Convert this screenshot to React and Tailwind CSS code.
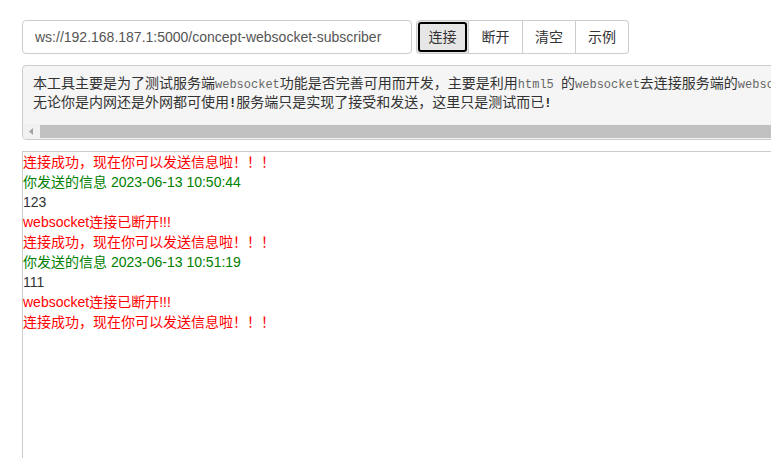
const logs = [
  { text: "连接成功，现在你可以发送信息啦！！！", color: "text-[#ff0000]" },
  { text: "你发送的信息 2023-06-13 10:50:44", color: "text-[#008000]" },
  { text: "123", color: "text-[#333333]" },
  { text: "websocket连接已断开!!!", color: "text-[#ff0000]" },
  { text: "连接成功，现在你可以发送信息啦！！！", color: "text-[#ff0000]" },
  { text: "你发送的信息 2023-06-13 10:51:19", color: "text-[#008000]" },
  { text: "111", color: "text-[#333333]" },
  { text: "websocket连接已断开!!!", color: "text-[#ff0000]" },
  { text: "连接成功，现在你可以发送信息啦！！！", color: "text-[#ff0000]" },
];

const Code = ({ children }) => (
  <span className="font-['Liberation_Mono',monospace] text-[12px] leading-none text-[#666]">
    {children}
  </span>
);

const Bang = () => (
  <span className="font-['Liberation_Mono',monospace] text-[12px] leading-none font-bold text-[#222]">
    !
  </span>
);

const App = () => {
  return (
    <div className="w-[771px] h-[458px] overflow-hidden bg-white font-['Liberation_Sans','Noto_Sans_CJK_SC',sans-serif]">
      <div className="w-[900px] pl-[22px] pt-[20px]">
        <div className="flex items-center gap-[4px]">
          <input
            type="text"
            defaultValue="ws://192.168.187.1:5000/concept-websocket-subscriber"
            className="w-[390px] h-[34px] px-[12px] border border-[#cccccc] rounded-[4px] text-[14px] text-[#555555] outline-none"
          />
          <div className="flex h-[34px]">
            <button className="w-[53px] h-[34px] border border-[#cccccc] rounded-l-[4px] bg-[#e6e6e6] text-[14px] text-[#333] p-[1px]">
              <span className="flex h-full items-center justify-center border-2 border-black rounded-[3px]">
                连接
              </span>
            </button>
            <button className="w-[54px] h-[34px] border border-l-0 border-[#cccccc] bg-white text-[14px] text-[#333]">
              断开
            </button>
            <button className="w-[53px] h-[34px] border border-l-0 border-[#cccccc] bg-white text-[14px] text-[#333]">
              清空
            </button>
            <button className="w-[53px] h-[34px] border border-l-0 border-[#cccccc] rounded-r-[4px] bg-white text-[14px] text-[#333]">
              示例
            </button>
          </div>
        </div>

        <div className="mt-[11px] border border-[#cccccc] rounded-[4px] bg-[#f5f5f5] overflow-hidden">
          <div className="px-[10px] pt-[7px] pb-[13px] text-[14px] text-[#333] whitespace-nowrap font-['Noto_Sans_CJK_SC',monospace]">
            <div className="h-[19px] leading-[19px]">
              本工具主要是为了测试服务端<Code>websocket</Code>功能是否完善可用而开发，主要是利用<Code>html5 </Code>的<Code>websocket</Code>去连接服务端的<Code>websocket</Code>，因此，
            </div>
            <div className="h-[19px] leading-[19px]">
              无论你是内网还是外网都可使用<Bang />服务端只是实现了接受和发送，这里只是测试而已<Bang />
            </div>
          </div>
          <div className="flex h-[15px] bg-[#f1f1f1] items-center">
            <div className="w-[17px] flex justify-center">
              <svg width="5" height="7" viewBox="0 0 5 7">
                <path d="M4 0 L0 3.5 L4 7 Z" fill="#a3a3a3" />
              </svg>
            </div>
            <div className="flex-1 h-[13px] bg-[#c1c1c1]" />
          </div>
        </div>

        <div className="mt-[11px] h-[320px] border border-[#cccccc] text-[14px] leading-[20px]">
          {logs.map((log, index) => (
            <div key={index} className={log.color}>
              {log.text}
            </div>
          ))}
        </div>
      </div>
    </div>
  );
};

export default App;
